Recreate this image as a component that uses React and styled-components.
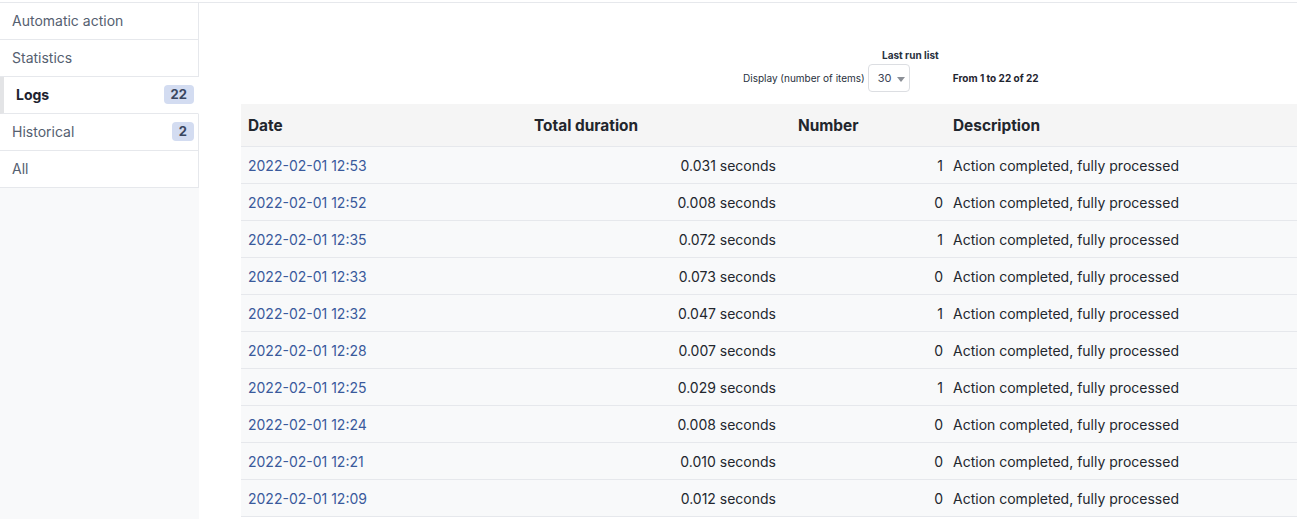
import React from "react";
import styled, { createGlobalStyle } from "styled-components";

const GlobalStyle = createGlobalStyle`
  html, body {
    margin: 0;
    padding: 0;
    background: #ffffff;
    font-family: Inter, "Noto Sans", "Liberation Sans", sans-serif;
  }
`;

const Page = styled.div`
  display: flex;
  margin-top: 2px;
  border-top: 1px solid #e6e8ec;
  min-height: 516px;
`;

const Side = styled.nav`
  width: 199px;
  flex-shrink: 0;
  background: #f8f9fa;
`;

const SideItem = styled.div`
  display: flex;
  align-items: center;
  justify-content: space-between;
  height: 36px;
  padding: 0 4px 1px 12px;
  box-sizing: border-box;
  height: 37px;
  background: #ffffff;
  border-bottom: 1px solid #e6e8ec;
  border-right: ${(p) => (p.$active ? "1px solid #ffffff" : "1px solid #e6e8ec")};
  border-left: ${(p) => (p.$active ? "4px solid #e3e4e6" : "none")};
  font-size: 14px;
  color: ${(p) => (p.$active ? "#1d2330" : "#556070")};
  font-weight: ${(p) => (p.$active ? 700 : 400)};
`;

const Badge = styled.span`
  display: inline-block;
  padding: 2px 7px;
  height: 15px;
  line-height: 15px;
  border-radius: 4px;
  background: #d3dcf1;
  color: #3a4660;
  font-size: 13px;
  font-weight: 700;
  text-align: center;
`;

const Main = styled.main`
  flex: 1;
  padding-left: 42px;
`;

const Pager = styled.div`
  padding: 45px 0 12px 502px;
  font-size: 10px;
  color: #27303d;
`;

const PagerTitle = styled.div`
  font-weight: 700;
  padding-left: 139px;
  height: 14px;
  line-height: 14px;
`;

const PagerRow = styled.div`
  display: flex;
  align-items: center;
  margin-top: 2px;
`;

const Select = styled.div`
  display: flex;
  align-items: center;
  gap: 6px;
  width: 42px;
  height: 28px;
  box-sizing: border-box;
  margin-left: 3px;
  padding-left: 9px;
  border: 1px solid #dcdee2;
  border-radius: 4px;
  font-size: 11px;
  color: #3b4454;
`;

const Caret = styled.span`
  width: 0;
  height: 0;
  border-left: 4px solid transparent;
  border-right: 4px solid transparent;
  border-top: 5px solid #8b8f96;
  margin-top: 2px;
`;

const Range = styled.span`
  margin-left: 43px;
  font-weight: 700;
  color: #1f2530;
`;

const Table = styled.div`
  display: grid;
  grid-template-columns: 286px 257px 162px 1fr;
`;

const HeadCell = styled.div`
  height: 42px;
  display: flex;
  align-items: center;
  background: #f5f5f5;
  border-bottom: 1px solid #e6e8ec;
  font-size: 15.4px;
  font-weight: 700;
  color: #22262d;
  padding-left: ${(p) => p.$pl || "7px"};
`;

const Cell = styled.div`
  height: 36px;
  display: flex;
  align-items: center;
  justify-content: ${(p) => (p.$right ? "flex-end" : "flex-start")};
  background: #f8f9fa;
  border-bottom: 1px solid #e6e8ec;
  font-size: 14px;
  color: ${(p) => (p.$link ? "#3a5a9c" : "#23272e")};
  padding: ${(p) => p.$pad || "0 7px"};
`;

const rows = [
  ["2022-02-01 12:53", "0.031", 1],
  ["2022-02-01 12:52", "0.008", 0],
  ["2022-02-01 12:35", "0.072", 1],
  ["2022-02-01 12:33", "0.073", 0],
  ["2022-02-01 12:32", "0.047", 1],
  ["2022-02-01 12:28", "0.007", 0],
  ["2022-02-01 12:25", "0.029", 1],
  ["2022-02-01 12:24", "0.008", 0],
  ["2022-02-01 12:21", "0.010", 0],
  ["2022-02-01 12:09", "0.012", 0],
];

export default function App() {
  return (
    <>
      <GlobalStyle />
      <Page>
        <Side>
          <SideItem>Automatic action</SideItem>
          <SideItem>Statistics</SideItem>
          <SideItem $active>
            Logs <Badge>22</Badge>
          </SideItem>
          <SideItem>
            Historical <Badge>2</Badge>
          </SideItem>
          <SideItem>All</SideItem>
        </Side>
        <Main>
          <Pager>
            <PagerTitle>Last run list</PagerTitle>
            <PagerRow>
              Display (number of items)
              <Select>
                30 <Caret />
              </Select>
              <Range>From 1 to 22 of 22</Range>
            </PagerRow>
          </Pager>
          <Table>
            <HeadCell>Date</HeadCell>
            <HeadCell>Total duration</HeadCell>
            <HeadCell $pl="14px">Number</HeadCell>
            <HeadCell>Description</HeadCell>
            {rows.map(([date, dur, n]) => (
              <React.Fragment key={date}>
                <Cell $link>{date}</Cell>
                <Cell $right $pad="0 8px 0 0">{dur} seconds</Cell>
                <Cell $right $pad="0 3px 0 0">{n}</Cell>
                <Cell>Action completed, fully processed</Cell>
              </React.Fragment>
            ))}
          </Table>
        </Main>
      </Page>
    </>
  );
}
